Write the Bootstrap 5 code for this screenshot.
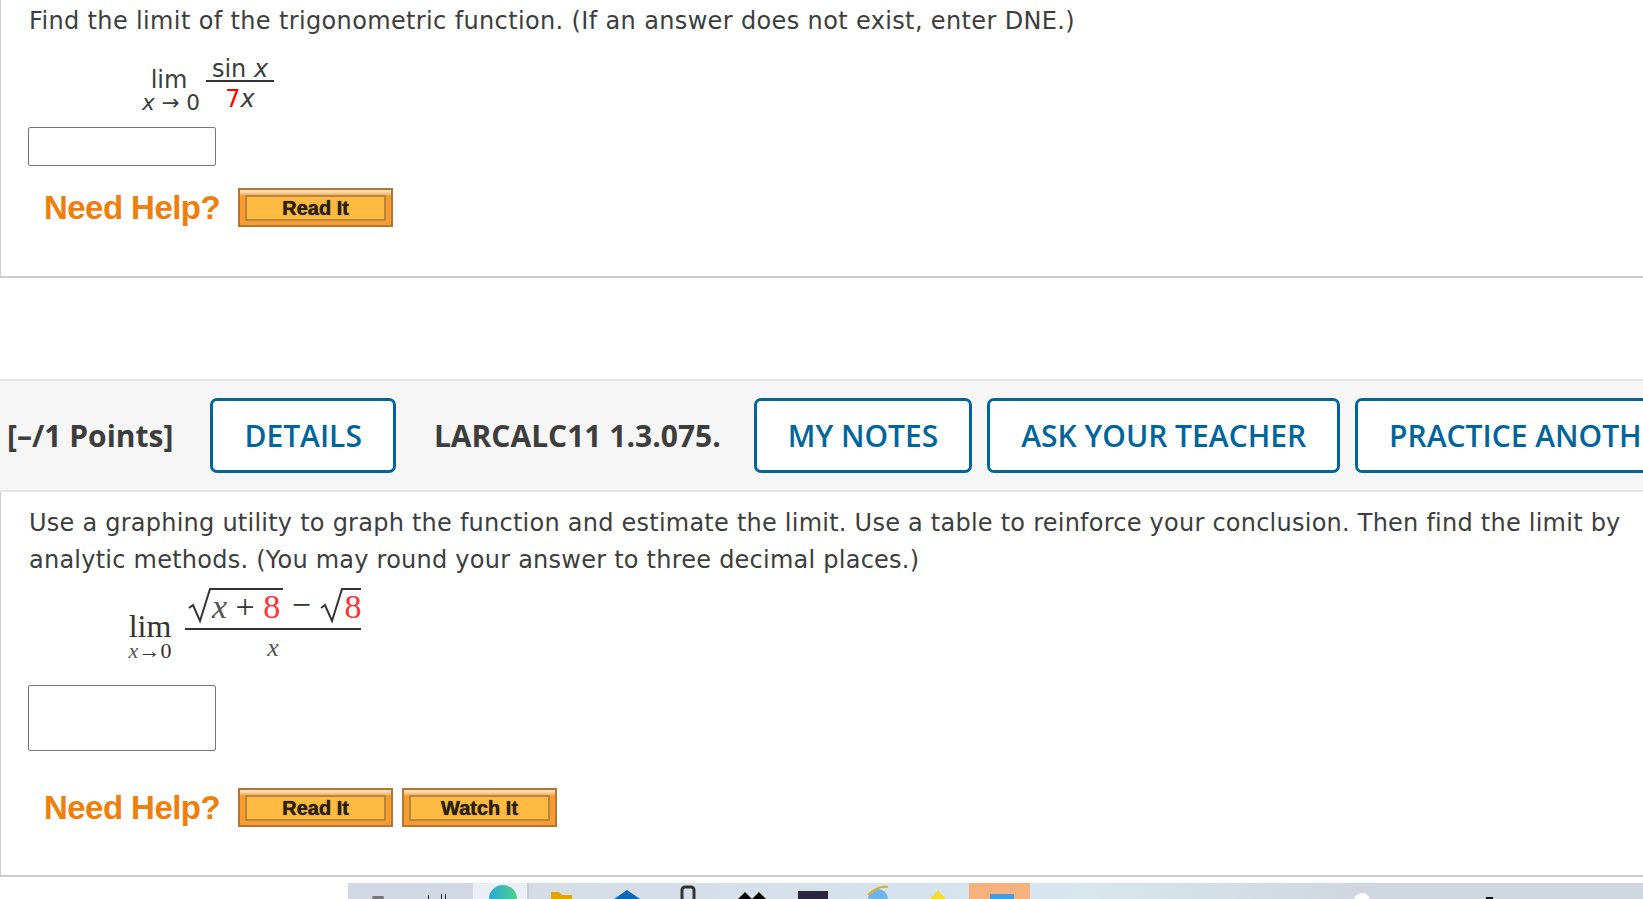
<!DOCTYPE html>
<html lang="en">

<head>
  <meta charset="UTF-8">
  <title>Limits homework</title>
  <link href="https://cdn.jsdelivr.net/npm/bootstrap@5.3.3/dist/css/bootstrap.min.css" rel="stylesheet">
  <style>
    html, body { height: 899px; overflow: hidden; }
    body { background: #fff; color: #3d3d3d; font-family: "DejaVu Sans", sans-serif; }
    .page { width: 1643px; height: 899px; overflow: hidden; }

    .q-body { border-left: 1px solid #ccc; border-bottom: 2px solid #ccc; padding-left: 27px; }
    .q-first { height: 278px; padding-top: 3px; margin-bottom: 101px; }
    .q-second { height: 385px; padding-top: 13px; margin-bottom: 6px; }
    .q-text { font-size: 24px; line-height: 36.5px; margin: 0 0 0 1px; letter-spacing: .36px; }
    .q-second .q-text { letter-spacing: .24px; }

    .q-head { height: 113px; background: #f6f6f6; border-top: 2px solid #e4e4e4; border-bottom: 2px solid #e4e4e4; padding-left: 7px; font-family: "Open Sans", sans-serif; white-space: nowrap; }
    .q-head b { font-size: 30px; font-weight: 700; color: #3d3d3d; flex-shrink: 0; }
    .head-btn { height: 75px; flex-shrink: 0; font-family: "Open Sans", sans-serif; font-size: 30px; font-weight: 600; color: #00659c; background: #fff; border: 3px solid #00659c; border-radius: 7px; padding: 0 31px; }
    .head-btn:hover { color: #00659c; background: #fff; border-color: #00659c; }
    .gap-points { margin-left: 37px; }
    .gap-code { margin-left: 38px; }
    .gap-notes { margin-left: 33px; }
    .gap-btn { margin-left: 15px; }

    .lim-sans { font-size: 24px; line-height: 1; padding-left: 112px; padding-top: 17px; height: 81px; }
    .lim-col { width: 58px; padding-top: 11px; }
    .lim-under { font-size: 21.5px; white-space: nowrap; margin-left: 0; margin-right: -4px; }
    .frac-sans { width: 68px; margin-left: 8px; }
    .frac-sans .top { border-bottom: 2px solid #333; padding-bottom: 3px; height: 25px; }
    .frac-sans .bot { padding-top: 5px; }
    .num-red { color: #f00; }

    .answer { display: block; width: 188px; background: #fff; border: 1px solid #767676; border-radius: 2px; }
    .answer-sm { height: 39px; margin-top: 6px; }
    .answer-lg { height: 66px; margin-top: 21px; }

    .help-row { margin-left: 16px; gap: 9px; }
    .help-row .need { font-family: "Liberation Sans", sans-serif; font-size: 33px; font-weight: 700; color: #ef7f0a; margin-right: 9px; letter-spacing: -.55px; }
    .help-row-a { margin-top: 17px; }
    .help-row-b { margin-top: 32px; }
    .orange-btn { width: 155px; height: 39px; padding: 5px 5px 4px; background: linear-gradient(#fbdcb6 0, #fbdcb6 2px, #f99b2f 6px); border: 2px solid #b47633; display: block; border-radius: 0; }
    .orange-btn span { display: block; height: 100%; background: #ffba42; border: 2px solid #b5883f; font-family: "Liberation Sans", sans-serif; font-weight: 700; font-size: 20px; line-height: 23px; color: #2a2007; text-align: center; text-shadow: 0 0 1px #2a2007; }

    .mathx { font-family: "Liberation Serif", serif; color: #333; }
    .lim-tex { padding-left: 99px; padding-top: 8px; height: 86px; }
    .lim-tex .word { font-size: 32px; line-height: 30px; margin-top: 25px; text-align: center; width: 46px; }
    .lim-tex .sub { font-size: 22px; line-height: 20px; text-align: center; width: 46px; white-space: nowrap; }
    .frac-tex { width: 176px; margin-left: 12px; flex-shrink: 0; }
    .frac-tex .top { height: 44px; border-bottom: 2px solid #333; font-size: 34px; line-height: 38px; padding-left: 3px; white-space: nowrap; }
    .frac-tex .bot { font-size: 26px; font-style: italic; line-height: 36px; text-align: center; }
    .rad { display: inline-flex; vertical-align: top; height: 38px; }
    .rad svg { flex-shrink: 0; }
    .rad > span { border-top: 2px solid #333; height: 35px; line-height: 34px; margin-top: 2px; }
    .rad-wide > span { padding-right: 3px; }
    .rad-last { margin-left: 1px; }
    .x-it { font-style: italic; color: #555; }
    .tex-red { color: #f33; }

    .taskstrip { height: 16px; position: relative; overflow: hidden; background: #fff; }
    .task-a { width: 348px; flex-shrink: 0; background: #fff; }
    .task-b { width: 125px; flex-shrink: 0; background: #d2d9e4; }
    .task-c { width: 56px; flex-shrink: 0; background: #ebeff5; border-right: 2px solid #c8ccd2; }
    .task-d { flex-grow: 1; background: linear-gradient(90deg, #d5dce6 0, #d6e5ee 45%, #d7e7ee 50%, #d0d6e0 75%, #d0d6e0 100%); }
    .task-ic { position: absolute; top: 0; left: 0; }
  </style>
</head>

<body>
  <div class="page">

    <!-- first question, header is scrolled off -->
    <div class="q-body q-first">
      <p class="q-text">Find the limit of the trigonometric function. (If an answer does not exist, enter DNE.)</p>
      <div class="lim-sans d-flex">
        <div class="lim-col text-center">
          <div>lim</div>
          <div class="lim-under"><i>x</i> → 0</div>
        </div>
        <div class="frac-sans text-center">
          <div class="top">sin <i>x</i></div>
          <div class="bot"><span class="num-red">7</span><i>x</i></div>
        </div>
      </div>
      <input class="answer answer-sm" type="text">
      <div class="help-row help-row-a d-flex align-items-center">
        <span class="need">Need Help?</span>
        <a class="orange-btn btn" href="#"><span>Read It</span></a>
      </div>
    </div>

    <!-- second question header -->
    <div class="q-head d-flex align-items-center">
      <b>[–/1 Points]</b>
      <button class="head-btn btn gap-points" type="button">DETAILS</button>
      <b class="gap-code">LARCALC11 1.3.075.</b>
      <button class="head-btn btn gap-notes" type="button">MY NOTES</button>
      <button class="head-btn btn gap-btn" type="button">ASK YOUR TEACHER</button>
      <button class="head-btn btn gap-btn" type="button">PRACTICE ANOTHER</button>
    </div>

    <div class="q-body q-second">
      <p class="q-text">Use a graphing utility to graph the function and estimate the limit. Use a table to reinforce your conclusion. Then find the limit by analytic methods. (You may round your answer to three decimal places.)</p>
      <div class="mathx lim-tex d-flex">
        <div>
          <div class="word">lim</div>
          <div class="sub"><i class="x-it">x</i>→0</div>
        </div>
        <div class="frac-tex">
          <div class="top">
            <span class="rad rad-wide"><svg width="24" height="38" viewBox="0 0 24 38"><path d="M1 22 L5 19 L12 35 L22 3 L24 3" fill="none" stroke="#333" stroke-width="2"/></svg><span><i class="x-it">x</i> + <span class="tex-red">8</span></span></span>
            − <span class="rad rad-last"><svg width="24" height="38" viewBox="0 0 24 38"><path d="M1 22 L5 19 L12 35 L22 3 L24 3" fill="none" stroke="#333" stroke-width="2"/></svg><span class="tex-red">8</span></span>
          </div>
          <div class="bot"><span class="x-it">x</span></div>
        </div>
      </div>
      <input class="answer answer-lg" type="text">
      <div class="help-row help-row-b d-flex align-items-center">
        <span class="need">Need Help?</span>
        <a class="orange-btn btn" href="#"><span>Read It</span></a>
        <a class="orange-btn btn" href="#"><span>Watch It</span></a>
      </div>
    </div>

    <!-- windows taskbar, only its top edge is in the shot -->
    <div class="taskstrip d-flex">
      <div class="task-a"></div>
      <div class="task-b"></div>
      <div class="task-c"></div>
      <div class="task-d"></div>
      <svg class="task-ic" width="1643" height="16" viewBox="0 0 1643 16">
        <defs>
          <linearGradient id="edgeTop" x1="0" y1="0" x2="1" y2="0">
            <stop offset="0" stop-color="#2aa8d8"/>
            <stop offset="1" stop-color="#4fd08c"/>
          </linearGradient>
        </defs>
        <rect x="372" y="13" width="12" height="3" rx="1.5" fill="#777"/>
        <rect x="428" y="12" width="1" height="4" fill="#222"/>
        <rect x="441" y="11" width="1" height="5" fill="#222"/>
        <rect x="445" y="11" width="1" height="5" fill="#222"/>
        <circle cx="503" cy="16" r="14" fill="url(#edgeTop)"/>
        <path d="M551 16v-7h8l3 3h10v4z" fill="#e2a500"/>
        <path d="M627 7l-13 9h26z" fill="#0a68b8"/>
        <rect x="682" y="4" width="12" height="14" rx="3" fill="none" stroke="#333" stroke-width="3"/>
        <path d="M738 16l7-7 7 7 7-7 7 7z" fill="#000"/>
        <rect x="798" y="8" width="30" height="8" fill="#2a2540"/>
        <circle cx="878" cy="16" r="10" fill="#6fb4e6"/>
        <path d="M868 12q10-10 20-8" fill="none" stroke="#e0b020" stroke-width="2"/>
        <path d="M938 7l-8 9h16z" fill="#f5dd30"/>
        <rect x="969" y="0" width="61" height="16" fill="#f5b27e"/>
        <rect x="990" y="11" width="24" height="5" fill="#3a9fe6"/>
        <circle cx="1362" cy="18" r="8" fill="#fff"/>
        <rect x="1486" y="14" width="7" height="2" fill="#111"/>
      </svg>
    </div>

  </div>
  <script src="https://cdn.jsdelivr.net/npm/bootstrap@5.3.3/dist/js/bootstrap.bundle.min.js"></script>
</body>

</html>
